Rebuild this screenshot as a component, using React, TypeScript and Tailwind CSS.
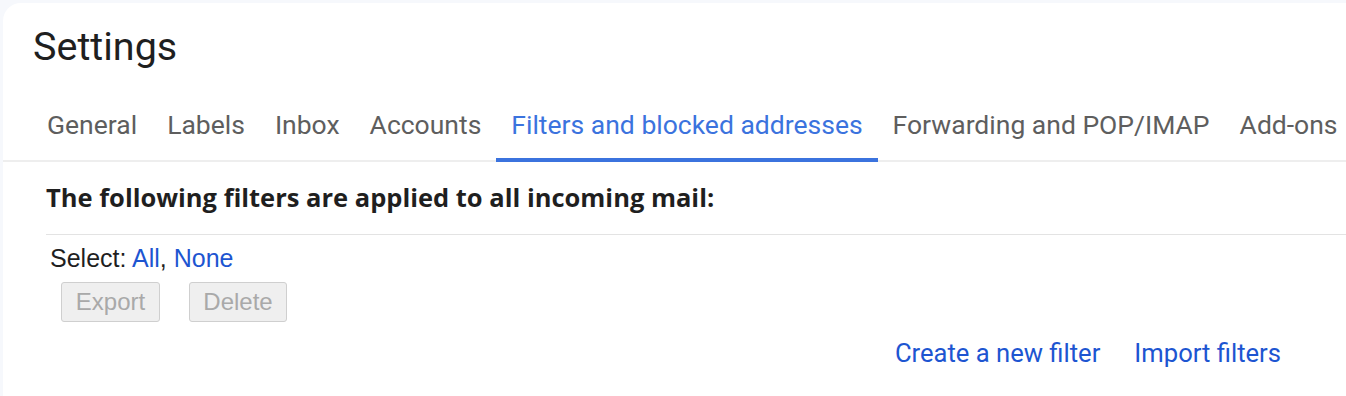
import React from "react";

const tabs = [
  "General",
  "Labels",
  "Inbox",
  "Accounts",
  "Filters and blocked addresses",
  "Forwarding and POP/IMAP",
  "Add-ons",
];

const ACTIVE = "Filters and blocked addresses";

export default function App() {
  return (
    <div className="min-h-screen bg-[#f6f8fc] pl-[3px] pt-[3px] font-['Roboto',sans-serif]">
      <div className="h-[393px] overflow-hidden rounded-tl-[18px] bg-white">
        <h1 className="pl-[30px] pt-[22px] text-[39.5px] leading-[44px] text-[#1f1f1f]">
          Settings
        </h1>

        {/* tab bar */}
        <nav className="mt-[24px] flex border-b-2 border-[#eeeeee] pl-[29px]">
          {tabs.map((tab) => (
            <div
              key={tab}
              className={`-mb-[2px] whitespace-nowrap border-b-4 px-[15px] pb-[17px] pt-[16px] text-[26.5px] leading-[32px] ${
                tab === ACTIVE
                  ? "border-[#3b73de] text-[#3b73de]"
                  : "border-transparent text-[#5e5e5e]"
              }`}
            >
              {tab}
            </div>
          ))}
        </nav>

        <div className="ml-[43px]">
          <div className="border-b border-[#e3e3e3] pb-[22px] pt-[20px] font-['Open_Sans',sans-serif] text-[25.5px] font-bold leading-[30px] text-[#1f1f1f]">
            The following filters are applied to all incoming mail:
          </div>

          <div className="mt-[9px] pl-[4px] font-['Liberation_Sans',Arial,sans-serif] text-[25px] leading-[28px] text-[#1f1f1f]">
            Select: <span className="text-[#1d55d1]">All</span>,{" "}
            <span className="text-[#1d55d1]">None</span>
          </div>

          <div className="mt-[10px] flex gap-[29px] pl-[15px] font-['Liberation_Sans',Arial,sans-serif]">
            <button className="h-[40px] w-[99px] rounded-[3px] border border-[#cfcfcf] bg-[#efefef] text-[24px] text-[#a9a9a9]">
              Export
            </button>
            <button className="h-[40px] w-[98px] rounded-[3px] border border-[#cfcfcf] bg-[#efefef] text-[24px] text-[#a9a9a9]">
              Delete
            </button>
          </div>
        </div>

        <div className="mt-[15px] flex justify-end gap-[34px] pr-[65px] text-[25.6px] leading-[32px] text-[#1d55d1]">
          <span>Create a new filter</span>
          <span>Import filters</span>
        </div>
      </div>
    </div>
  );
}
